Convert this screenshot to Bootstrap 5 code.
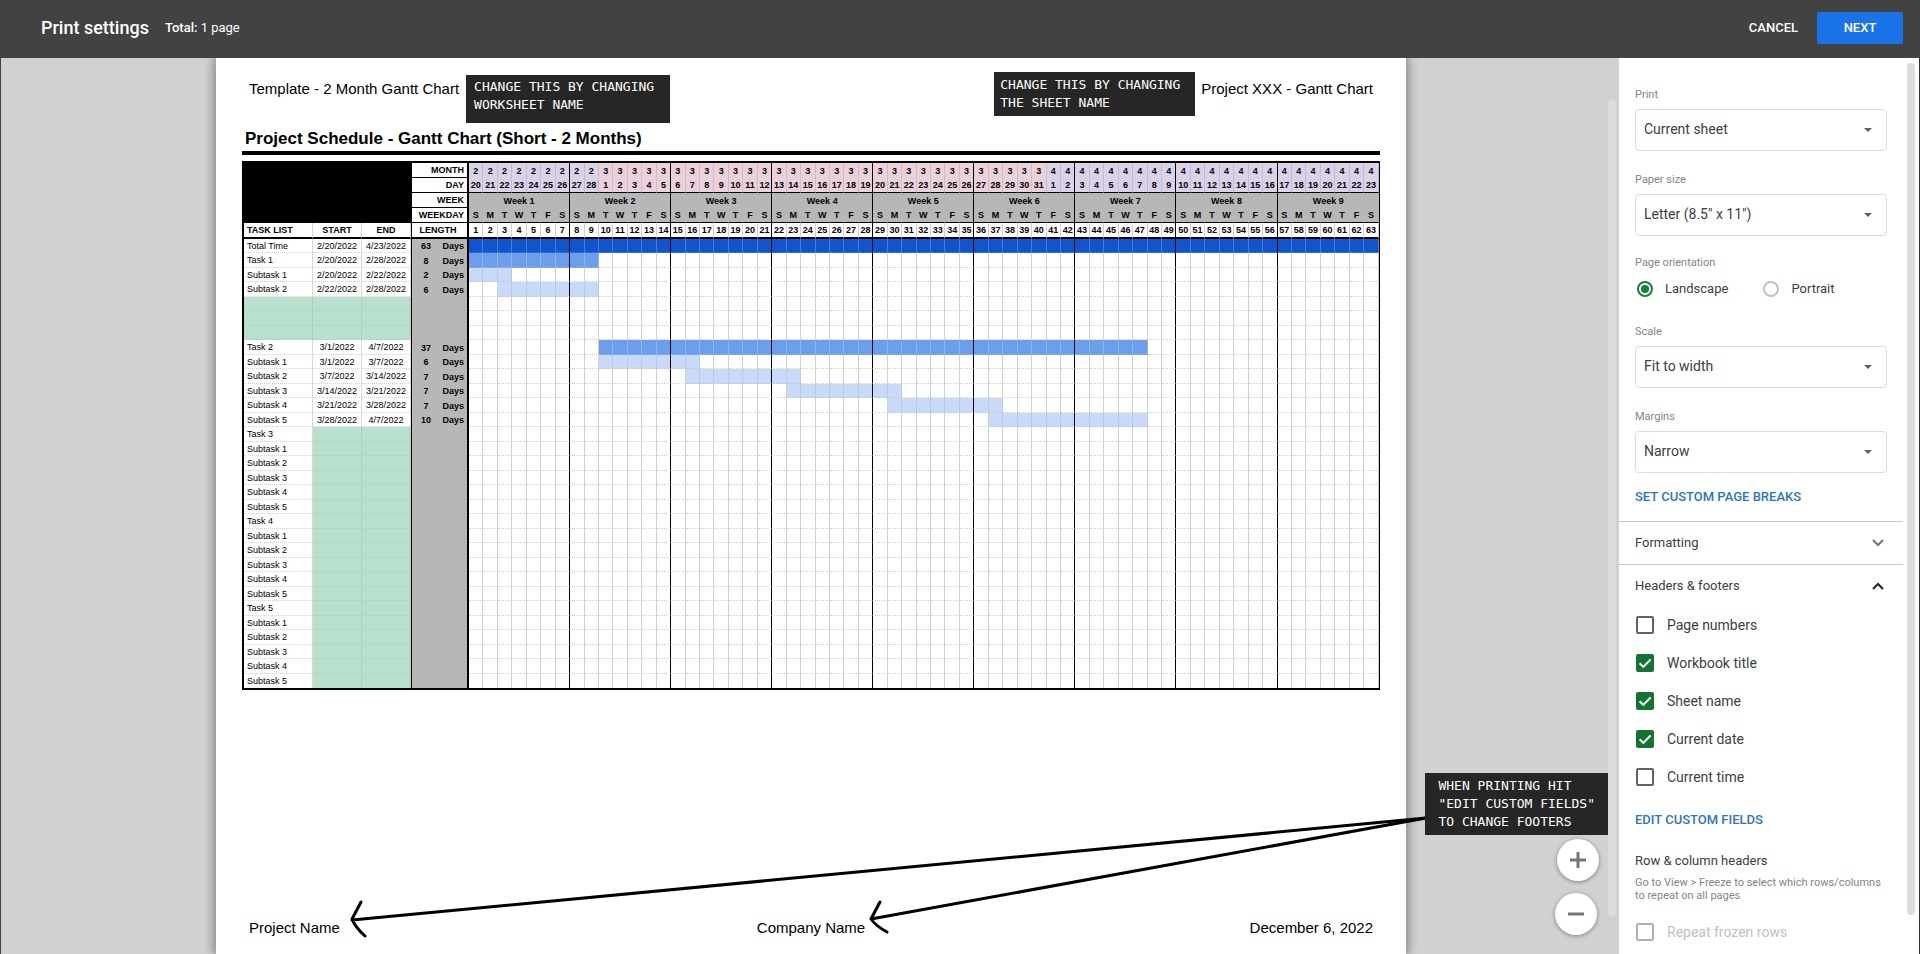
<!DOCTYPE html>
<html lang="en">
<head>
<meta charset="utf-8">
<meta name="viewport" content="width=device-width, initial-scale=1">
<title>Print settings</title>
<link rel="stylesheet" href="https://cdn.jsdelivr.net/npm/bootstrap@5.3.0/dist/css/bootstrap.min.css">
<style>
  body { font-family: Roboto, sans-serif; font-size: 14px; color: #3c4043; background: #424242; }
  .topbar { height: 58px; padding: 0 17px 2px 41px; background: #424242; color: #fff; }
  .topbar h1 { font-size: 18px; line-height: 24px; font-weight: 500; }
  .topbar .total { font-size: 13px; line-height: 24px; }
  .topbar b, .topbar .btn { font-weight: 500; }
  .topbar .btn { font-size: 13px; line-height: 20px; padding: 5px 18px; height: 32px; border-radius: 2px; color: #fff; }
  .topbar .btn-next { width: 86px; background: #1a73e8; }

  .canvas { background: #d1d1d1; margin-left: 1px; padding: 0 213px 0 215px; }
  .paper { height: 100%; background: #fff; padding: 0 26px 17px; box-shadow: 0 0 10px 2px rgba(0,0,0,.4);
           font-family: "Liberation Sans", Arial, sans-serif; font-size: 15px; line-height: 18px; color: #000; }
  .running-head { height: 69px; padding: 0 7px; }
  .running-head > span { padding-top: 22px; }
  .running-foot { padding: 0 7px; }
  .note { background: #262626; color: #fff; font-family: "DejaVu Sans Mono", monospace; font-size: 13px; line-height: 18px; }
  .note-left { margin: 17px 0 0 7px; padding: 3px 16px 9px 8px; }
  .note-right { margin: 14px 6px 0 0; padding: 4px 15px 4px 6px; }
  .note-foot { right: 11px; top: 715px; padding: 4px 13px; }
  .sheet-title { font-size: 17px; line-height: 24px; font-weight: 700; padding-left: 3px; border-bottom: 4px solid #000; margin-bottom: 6px; }

  .gantt { width: 100%; table-layout: fixed; border-collapse: separate; border-spacing: 0;
           border: 2px solid #000; border-width: 2px 1px 2px 2px; font-size: 9px; line-height: 12px; }
  .gantt th, .gantt td { padding: 0; overflow: hidden; white-space: nowrap; text-align: center; vertical-align: middle; }
  .gantt th { font-weight: 700; }
  .gantt tr { height: 14px; }
  .gantt thead tr, .gantt tbody tr:nth-child(even) { height: 15px; }
  .gantt thead tr:last-child { height: 16px; }
  .gantt .c-task { width: 69px; } .gantt .c-date { width: 49px; } .gantt .c-len { width: 29px; }
  .gantt .blank { background: #000; }
  .gantt .lab { text-align: right; padding-right: 3px; border-left: 1px solid #000; border-right: 2px solid #000; border-bottom: 1px solid #000; }
  .gantt .winter { background: #d9d2e9; } .gantt .march { background: #ead1dc; }
  .gantt .gray { background: #b7b7b7; }
  .gantt .day { border-right: 1px solid #d0d0d0; }
  .gantt thead .day.winter, .gantt thead .day.march { border-right-color: rgba(0,0,0,.1); }
  .gantt .day.gray { border-right-color: #b7b7b7; }
  .gantt .wk { border-right: 1px solid #000 !important; }
  .gantt .line { border-bottom: 1px solid #000; }
  .gantt .line2 > th { border-bottom: 2px solid #000; }
  .gantt tbody td { border-bottom: 1px dotted #d0d0d0; }
  .gantt tbody tr:last-child td { border-bottom: 0; }
  .gantt .name { text-align: left; padding-left: 3px; }
  .gantt .date, .gantt .name { border-right: 1px solid #d8d8d8; }
  .gantt .green { background: #b7e1cd; border-color: #a9d3bf !important; }
  .gantt td.num { background: #b7b7b7; font-weight: 700; border-left: 1px solid #000; border-bottom: 0; }
  .gantt td.unit { background: #b7b7b7; font-weight: 700; text-align: right; padding-right: 3px; border-right: 2px solid #000; border-bottom: 0; }
  .gantt .b0 { background: #1155cc; border-color: #4a7ddb; } .gantt .b1 { background: #6d9eeb; border-color: #8db3ee; }
  .gantt .b2 { background: #c9daf8; border-color: #b9c9e6; }

  .arrows { inset: 0; pointer-events: none; }
  .zoom-in, .zoom-out { width: 42px; height: 42px; background: #fff; box-shadow: 0 1px 4px rgba(0,0,0,.4); }
  .zoom-in { right: 20px; top: 781px; } .zoom-out { right: 22px; top: 835px; }
  .thumb { width: 8px; border-radius: 4px; background: #dadce0; }
  .thumb-canvas { right: 3px; top: 42px; bottom: 38px; }
  .thumb-side { right: 4px; top: 5px; bottom: 39px; }

  .side { width: 301px; background: #fff; border-right: 1px solid #333; }
  .side-body { margin-right: 16px; }
  .sec { padding: 0 16px; }
  .side .cap { font-size: 11px; line-height: 16px; color: #80868b; display: block; margin-top: 21px; }
  .side .cap:first-child { margin-top: 29px; }
  .side .cap-near { margin-top: 19px; }
  .side .cap-far { margin-top: 27px; }
  .side .form-select { height: 42px; margin-top: 6px; font-size: 14px; line-height: 20px; padding: 0 40px 2px 8px; color: #3c4043; border-color: #dadce0; border-radius: 4px;
    background-image: url("data:image/svg+xml,%3Csvg xmlns='http://www.w3.org/2000/svg' viewBox='0 0 8 4'%3E%3Cpath fill='%235f6368' d='M0 0h8L4 4z'/%3E%3C/svg%3E"); background-size: 8px 4px; background-position: right 14px center; }
  .side .form-check-input { margin: 0; float: none; flex: none; width: 18px; height: 18px; border: 2px solid #5f6368; border-radius: 2px; }
  .side .form-check-input:checked { background-color: #137333; border-color: #137333; background-size: 18px 18px;
    background-image: url("data:image/svg+xml,%3Csvg xmlns='http://www.w3.org/2000/svg' viewBox='0 0 18 18'%3E%3Cpath fill='none' stroke='%23fff' stroke-width='2' d='M3.6 9.2l3.7 3.7 7.3-7.4'/%3E%3C/svg%3E"); }
  .side .form-check-input[type=radio] { width: 16px; height: 16px; border-radius: 50%; border-color: #bdc1c6; }
  .side .form-check-input[type=radio]:checked { background-color: #fff; border-color: #188038; background-size: 16px 16px;
    background-image: url("data:image/svg+xml,%3Csvg xmlns='http://www.w3.org/2000/svg' viewBox='0 0 16 16'%3E%3Ccircle cx='8' cy='8' r='4' fill='%23188038'/%3E%3C/svg%3E"); }
  .radios { font-size: 13px; line-height: 16px; padding: 10px 2px 0; }
  .radios label { margin-left: 12px; }
  .side .portrait { margin-left: 35px; }
  .side a { font-size: 13px; line-height: 18px; font-weight: 500; color: #3073c4; text-decoration: none; display: block; }
  .side .breaks { margin: 15px 0; }
  .side .fields { margin: 15px 0 23px; }
  .fold { width: 100%; height: 42px; border: 0; background: none; font-size: 13px; padding: 0 18px 0 16px; color: #3c4043; }
  .rule { border-top: 1px solid #ccc; }
  .ticks { margin-top: -1px; }
  .tick { height: 38px; padding-left: 1px; }
  .tick label { margin-left: 13px; }
  .side .off { color: #bdc1c6; opacity: 1; }
  .side .rc { font-size: 13px; line-height: 18px; }
  .hint { font-size: 11px; line-height: 13px; color: #80868b; margin: 6px 0 11px; }
</style>
</head>
<body class="vh-100 overflow-hidden d-flex flex-column">
<header class="topbar d-flex align-items-center flex-shrink-0">
  <h1 class="mb-0 me-3">Print settings</h1>
  <span class="total"><b>Total:</b> 1 page</span>
  <div class="ms-auto d-flex">
    <button type="button" class="btn">CANCEL</button>
    <button type="button" class="btn btn-next">NEXT</button>
  </div>
</header>

<div class="d-flex flex-grow-1 overflow-hidden">
  <main class="canvas flex-grow-1 position-relative overflow-hidden">
    <div class="paper d-flex flex-column">
      <div class="running-head d-flex align-items-start">
        <span>Template - 2 Month Gantt Chart</span>
        <div class="note note-left">CHANGE THIS BY CHANGING<br>WORKSHEET NAME</div>
        <div class="note note-right ms-auto">CHANGE THIS BY CHANGING<br>THE SHEET NAME</div>
        <span>Project XXX - Gantt Chart</span>
      </div>
      <h2 class="sheet-title">Project Schedule - Gantt Chart (Short - 2 Months)</h2>
      <table class="gantt">
        <colgroup><col class="c-task"><col class="c-date"><col class="c-date"><col class="c-len"><col class="c-len"><col span="63"></colgroup>
        <thead></thead>
        <tbody></tbody>
      </table>
      <div class="running-foot row gx-0 mt-auto">
        <span class="col">Project Name</span>
        <span class="col text-center">Company Name</span>
        <span class="col text-end">December 6, 2022</span>
      </div>
    </div>
    <svg class="arrows position-absolute w-100 h-100" fill="none" stroke="#000" stroke-width="3" stroke-linecap="round" aria-hidden="true">
      <path d="M1425 760L351 862M360 844L351 861Q354 869 364 878"/>
      <path d="M1425 760L870 861M879 844L870 861Q875 868 886 874"/>
    </svg>
    <div class="thumb thumb-canvas position-absolute"></div>
    <div class="note note-foot position-absolute">WHEN PRINTING HIT<br>"EDIT CUSTOM FIELDS"<br>TO CHANGE FOOTERS</div>
    <button type="button" class="zoom-in btn rounded-circle border-0 p-0 position-absolute" aria-label="Zoom in"><svg width="16" height="16" class="d-block mx-auto"><path d="M8 0v16M0 8h16" stroke="#757575" stroke-width="3"/></svg></button>
    <button type="button" class="zoom-out btn rounded-circle border-0 p-0 position-absolute" aria-label="Zoom out"><svg width="16" height="16" class="d-block mx-auto"><path d="M0 8h16" stroke="#757575" stroke-width="3"/></svg></button>
  </main>

  <aside class="side flex-shrink-0 position-relative overflow-hidden">
    <div class="side-body">
      <div class="sec">
        <label class="cap" for="print">Print</label>
        <select id="print" class="form-select"><option>Current sheet</option></select>
        <label class="cap" for="paper">Paper size</label>
        <select id="paper" class="form-select"><option>Letter (8.5" x 11")</option></select>
        <span class="cap cap-near">Page orientation</span>
        <div class="radios d-flex align-items-center">
          <input class="form-check-input" type="radio" name="orient" id="land" checked><label for="land">Landscape</label>
          <input class="form-check-input portrait" type="radio" name="orient" id="port"><label for="port">Portrait</label>
        </div>
        <label class="cap cap-far" for="scale">Scale</label>
        <select id="scale" class="form-select"><option>Fit to width</option></select>
        <label class="cap" for="margins">Margins</label>
        <select id="margins" class="form-select"><option>Narrow</option></select>
        <a href="#" class="breaks">SET CUSTOM PAGE BREAKS</a>
      </div>
      <div class="rule"><button type="button" class="fold d-flex align-items-center justify-content-between">Formatting
        <svg width="14" height="8" fill="none" stroke="#757575" stroke-width="2"><path d="M2 1l5 5 5-5"/></svg></button></div>
      <div class="rule"><button type="button" class="fold d-flex align-items-center justify-content-between">Headers &amp; footers
        <svg width="14" height="8" fill="none" stroke="#202124" stroke-width="2"><path d="M2 7l5-5 5 5"/></svg></button></div>
      <div class="sec ticks">
        <div class="tick d-flex align-items-center"><input class="form-check-input" type="checkbox" id="k1"><label for="k1">Page numbers</label></div>
        <div class="tick d-flex align-items-center"><input class="form-check-input" type="checkbox" id="k2" checked><label for="k2">Workbook title</label></div>
        <div class="tick d-flex align-items-center"><input class="form-check-input" type="checkbox" id="k3" checked><label for="k3">Sheet name</label></div>
        <div class="tick d-flex align-items-center"><input class="form-check-input" type="checkbox" id="k4" checked><label for="k4">Current date</label></div>
        <div class="tick d-flex align-items-center"><input class="form-check-input" type="checkbox" id="k5"><label for="k5">Current time</label></div>
        <a href="#" class="fields">EDIT CUSTOM FIELDS</a>
        <div class="rc">Row &amp; column headers</div>
        <p class="hint text-nowrap">Go to View &gt; Freeze to select which rows/columns<br>to repeat on all pages</p>
        <div class="tick d-flex align-items-center"><input class="form-check-input" type="checkbox" id="k6" disabled><label for="k6" class="off">Repeat frozen rows</label></div>
      </div>
    </div>
    <div class="thumb thumb-side position-absolute"></div>
  </aside>
</div>
<script src="https://cdn.jsdelivr.net/npm/bootstrap@5.3.0/dist/js/bootstrap.bundle.min.js"></script>
<script>
  const days = Array.from({length: 63}, (_, i) => {
    const d = new Date(2022, 1, 20 + i);
    return {n: i + 1, m: d.getMonth() + 1, d: d.getDate(), w: 'SMTWTFS'[d.getDay()], end: i % 7 === 6 && i < 62 ? ' wk' : ''};
  });
  const season = x => x.m === 3 ? 'march' : 'winter';
  const cells = (cls, key) => days.map(x => `<th class="day ${cls(x)}${x.end}">${x[key]}</th>`).join('');
  const weeks = Array.from({length: 9}, (_, i) => `<th colspan="7" class="gray${i < 8 ? ' wk' : ''}">Week ${i + 1}</th>`).join('');
  const lab = t => `<th colspan="2" class="lab">${t}</th>`;
  document.querySelector('.gantt thead').innerHTML =
    `<tr><th colspan="3" rowspan="4" class="blank"></th>${lab('MONTH')}${cells(season, 'm')}</tr>` +
    `<tr>${lab('DAY')}${cells(x => season(x) + ' line', 'd')}</tr>` +
    `<tr>${lab('WEEK')}${weeks}</tr>` +
    `<tr>${lab('WEEKDAY')}${cells(() => 'gray line', 'w')}</tr>` +
    `<tr class="line2"><th class="name">TASK LIST</th><th class="date">START</th><th class="date">END</th><th colspan="2" class="lab text-center">LENGTH</th>${cells(() => '', 'n')}</tr>`;

  // name, start, end, length, bar style, first day, last day
  const rows = [
    ['Total Time', '2/20/2022', '4/23/2022', 63, 0, 1, 63],
    ['Task 1', '2/20/2022', '2/28/2022', 8, 1, 1, 9],
    ['Subtask 1', '2/20/2022', '2/22/2022', 2, 2, 1, 3],
    ['Subtask 2', '2/22/2022', '2/28/2022', 6, 2, 3, 9],
    [''], [''], [''],
    ['Task 2', '3/1/2022', '4/7/2022', 37, 1, 10, 47],
    ['Subtask 1', '3/1/2022', '3/7/2022', 6, 2, 10, 16],
    ['Subtask 2', '3/7/2022', '3/14/2022', 7, 2, 16, 23],
    ['Subtask 3', '3/14/2022', '3/21/2022', 7, 2, 23, 30],
    ['Subtask 4', '3/21/2022', '3/28/2022', 7, 2, 30, 37],
    ['Subtask 5', '3/28/2022', '4/7/2022', 10, 2, 37, 47]
  ];
  for (let t = 3; t <= 5; t++) {
    rows.push(['Task ' + t]);
    for (let s = 1; s <= 5; s++) rows.push(['Subtask ' + s]);
  }
  document.querySelector('.gantt tbody').innerHTML = rows.map(([name, start, end, len, kind, from, to]) => {
    const g = start ? '' : ' green';
    return `<tr><td class="name${name ? '' : ' green'}">${name}</td><td class="date${g}">${start || ''}</td><td class="date${g}">${end || ''}</td>` +
      `<td class="num">${len || ''}</td><td class="unit">${len ? 'Days' : ''}</td>` +
      days.map(x => `<td class="day${x.n >= from && x.n <= to ? ' b' + kind : ''}${x.end}"></td>`).join('') + '</tr>';
  }).join('');
</script>
</body>
</html>
